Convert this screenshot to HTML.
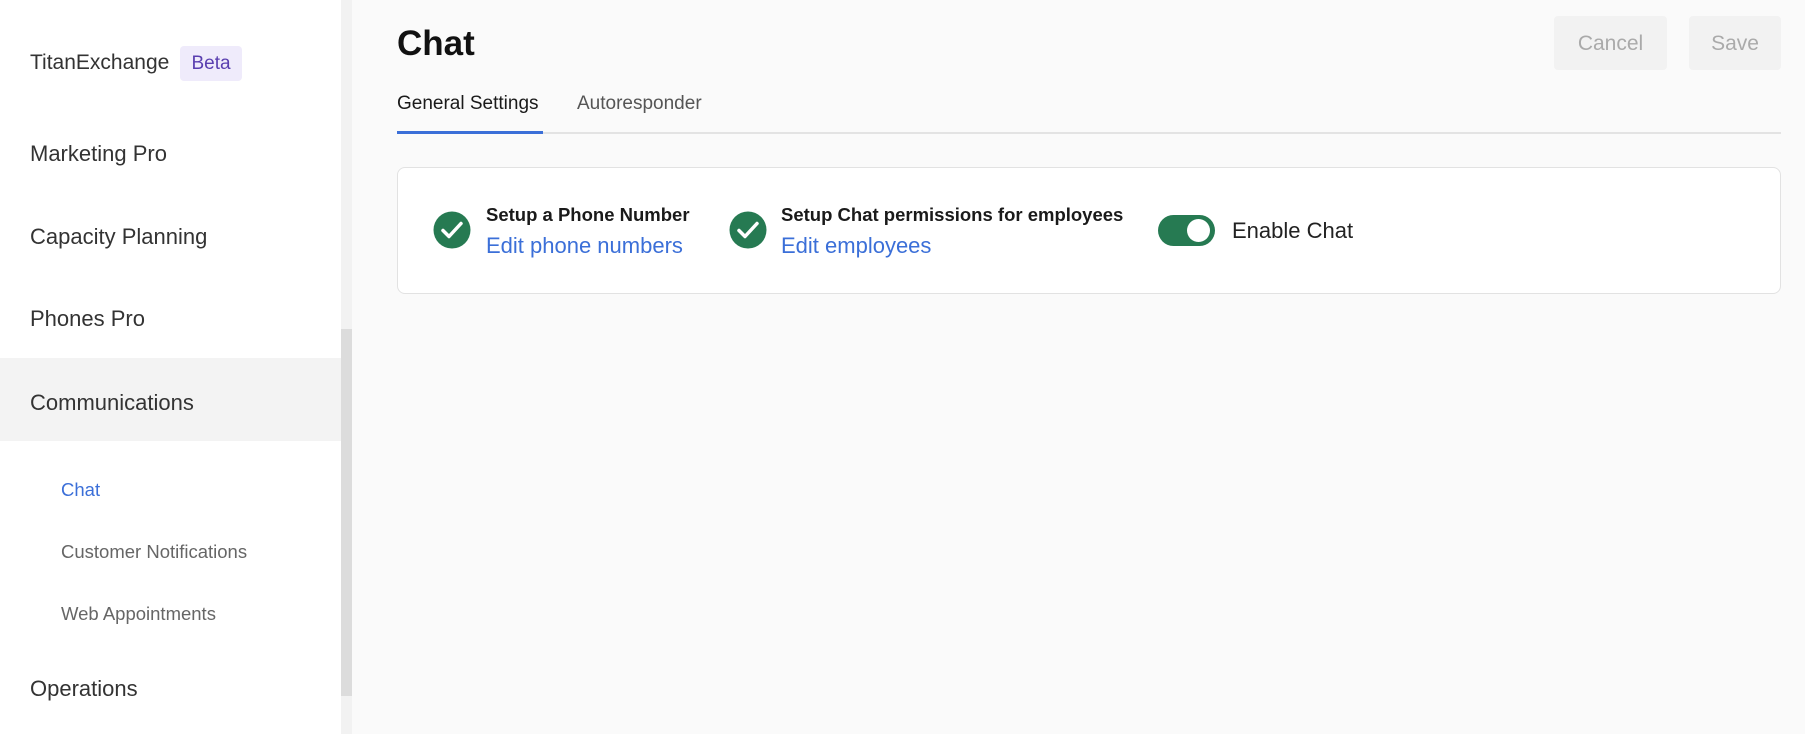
<!DOCTYPE html>
<html><head><style>
*{margin:0;padding:0;box-sizing:border-box}
body{width:1805px;height:734px;overflow:hidden;background:#fafafa;font-family:"Liberation Sans",sans-serif;position:relative;color:#1a1a1a}
.sb{position:absolute;left:0;top:0;width:341px;height:734px;background:#fff}
.scr{position:absolute;left:341px;top:0;width:11px;height:734px;background:#f2f2f2}
.thumb{position:absolute;left:341px;top:329px;width:11px;height:367px;background:#dcdcdc}
.it{position:absolute;left:30px;font-size:22px;color:#333;transform:translateY(-50%)}
.sub{position:absolute;left:61px;font-size:18.5px;color:#666;transform:translateY(-50%)}
.a{position:absolute}
</style></head><body>
<div class="sb"></div>
<div class="a" style="left:0;top:358px;width:341px;height:83px;background:#f3f3f3"></div>
<div class="scr"></div><div class="thumb"></div>
<div class="it" style="top:63px;font-size:21px">TitanExchange</div>
<div class="a" style="left:180px;top:46px;width:62px;height:35px;background:#efebfb;border-radius:4px;color:#5a3fb0;font-size:19px;line-height:35px;text-align:center">Beta</div>
<div class="it" style="top:154px">Marketing Pro</div>
<div class="it" style="top:237px">Capacity Planning</div>
<div class="it" style="top:319px">Phones Pro</div>
<div class="it" style="top:403px">Communications</div>
<div class="sub" style="top:490px;color:#3b6fd8">Chat</div>
<div class="sub" style="top:552px">Customer Notifications</div>
<div class="sub" style="top:614px">Web Appointments</div>
<div class="it" style="top:689px">Operations</div>

<div class="a" style="left:397px;top:24px;font-size:35px;font-weight:bold;color:#111">Chat</div>
<div class="a" style="left:1554px;top:16px;width:113px;height:54px;background:#f2f2f2;border-radius:4px;color:#aaa;font-size:21px;line-height:56px;text-align:center">Cancel</div>
<div class="a" style="left:1689px;top:16px;width:92px;height:54px;background:#f2f2f2;border-radius:4px;color:#aaa;font-size:21px;line-height:56px;text-align:center">Save</div>
<div class="a" style="left:397px;top:93px;font-size:19px;color:#1a1a1a">General Settings</div>
<div class="a" style="left:577px;top:93px;font-size:19px;color:#555">Autoresponder</div>
<div class="a" style="left:397px;top:132px;width:1384px;height:2px;background:#e3e3e3"></div>
<div class="a" style="left:397px;top:131px;width:146px;height:3px;background:#3b6fd8"></div>

<div class="a" style="left:397px;top:167px;width:1384px;height:127px;background:#fff;border:1px solid #e2e2e2;border-radius:8px"></div>
<svg class="a" style="left:433px;top:211px" width="38" height="38" viewBox="0 0 38 38"><circle cx="19" cy="19" r="18.5" fill="#267a52"/><path d="M10 19.5l6 6 12-13" stroke="#fff" stroke-width="3.5" fill="none" stroke-linecap="round" stroke-linejoin="round"/></svg>
<div class="a" style="left:486px;top:204px;font-size:18.5px;font-weight:bold">Setup a Phone Number</div>
<div class="a" style="left:486px;top:233px;font-size:22px;color:#3b6fd8">Edit phone numbers</div>
<svg class="a" style="left:729px;top:211px" width="38" height="38" viewBox="0 0 38 38"><circle cx="19" cy="19" r="18.5" fill="#267a52"/><path d="M10 19.5l6 6 12-13" stroke="#fff" stroke-width="3.5" fill="none" stroke-linecap="round" stroke-linejoin="round"/></svg>
<div class="a" style="left:781px;top:204px;font-size:18.5px;font-weight:bold">Setup Chat permissions for employees</div>
<div class="a" style="left:781px;top:233px;font-size:22px;color:#3b6fd8">Edit employees</div>
<div class="a" style="left:1158px;top:215px;width:57px;height:31px;background:#267a52;border-radius:16px"></div>
<div class="a" style="left:1187px;top:219px;width:23px;height:23px;background:#fff;border-radius:50%"></div>
<div class="a" style="left:1232px;top:218px;font-size:22px;color:#222">Enable Chat</div>
</body></html>
